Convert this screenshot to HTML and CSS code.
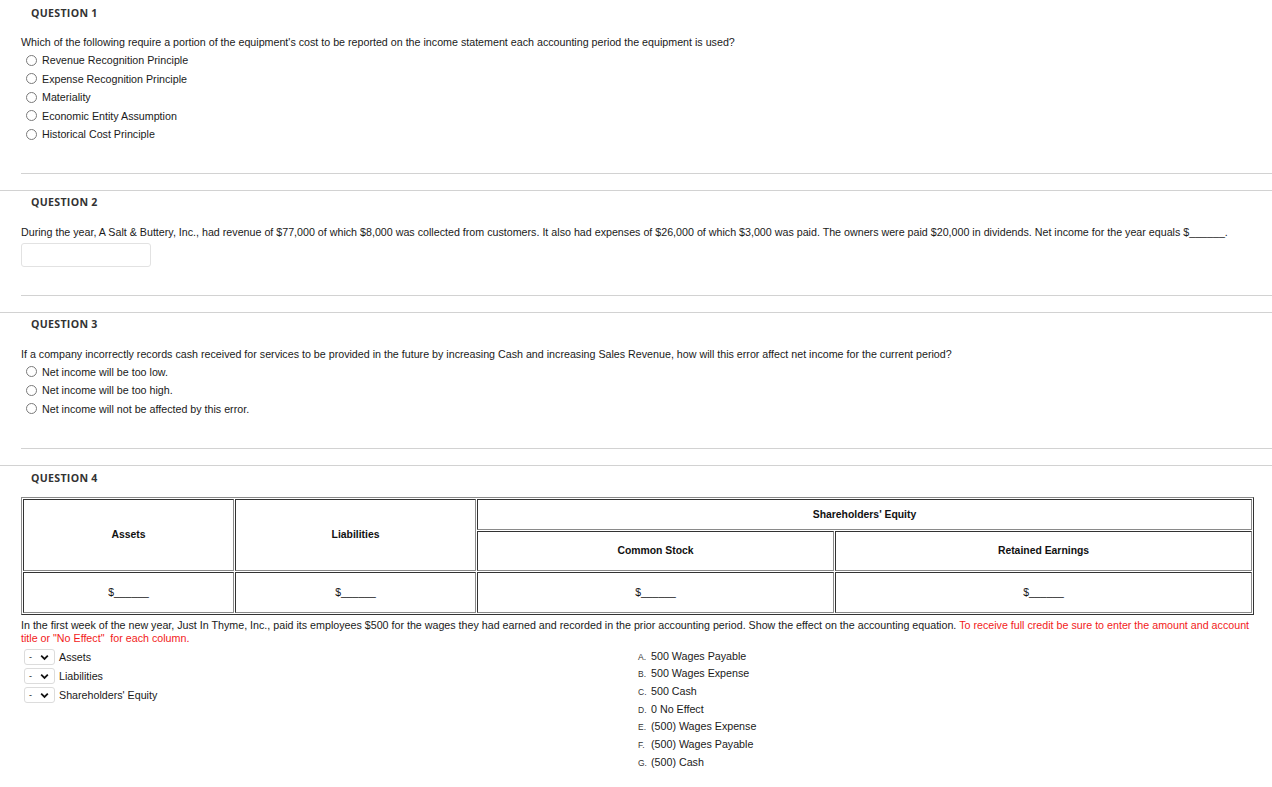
FILE: index.html
```html
<!DOCTYPE html>
<html>
<head>
<meta charset="utf-8">
<link rel="stylesheet" href="styles.css">
</head>
<body>
<div class="question first">
  <div class="qhead">QUESTION 1</div>
  <div class="qbody">
    <div class="qtext">Which of the following require a portion of the equipment's cost to be reported on the income statement each accounting period the equipment is used?</div>
    <ul class="opts">
      <li><span class="radio"></span>Revenue Recognition Principle</li>
      <li><span class="radio"></span>Expense Recognition Principle</li>
      <li><span class="radio"></span>Materiality</li>
      <li><span class="radio"></span>Economic Entity Assumption</li>
      <li><span class="radio"></span>Historical Cost Principle</li>
    </ul>
  </div>
  <div class="inner-rule q1rule"></div>
</div>

<div class="question">
  <div class="qhead">QUESTION 2</div>
  <div class="qbody">
    <div class="qtext">During the year, A Salt &amp; Buttery, Inc., had revenue of $77,000 of which $8,000 was collected from customers. It also had expenses of $26,000 of which $3,000 was paid. The owners were paid $20,000 in dividends. Net income for the year equals $______.</div>
    <div class="answer-box"></div>
  </div>
  <div class="inner-rule q2rule"></div>
</div>

<div class="question">
  <div class="qhead">QUESTION 3</div>
  <div class="qbody">
    <div class="qtext">If a company incorrectly records cash received for services to be provided in the future by increasing Cash and increasing Sales Revenue, how will this error affect net income for the current period?</div>
    <ul class="opts">
      <li><span class="radio"></span>Net income will be too low.</li>
      <li><span class="radio"></span>Net income will be too high.</li>
      <li><span class="radio"></span>Net income will not be affected by this error.</li>
    </ul>
  </div>
  <div class="inner-rule q3rule"></div>
</div>

<div class="question">
  <div class="qhead">QUESTION 4</div>
  <div class="qbody">
    <table class="eq">
      <colgroup>
        <col class="c1"><col class="c2"><col class="c3"><col class="c4">
      </colgroup>
      <tr class="r1">
        <th rowspan="2">Assets</th>
        <th rowspan="2">Liabilities</th>
        <th colspan="2" class="se">Shareholders' Equity</th>
      </tr>
      <tr class="r2">
        <th>Common Stock</th>
        <th>Retained Earnings</th>
      </tr>
      <tr class="r3">
        <td>$______</td>
        <td>$______</td>
        <td>$______</td>
        <td>$______</td>
      </tr>
    </table>
    <div class="q4text">In the first week of the new year, Just In Thyme, Inc., paid its employees $500 for the wages they had earned and recorded in the prior accounting period. Show the effect on the accounting equation. <span class="red">To receive full credit be sure to enter the amount and account title or "No Effect"&nbsp; for each column.</span></div>
    <div class="match">
      <ul class="selects">
        <li><span class="sel"><span class="dash">-</span><svg viewBox="0 0 10 8" width="9" height="7"><path d="M1.2 1.8 L5 5.6 L8.8 1.8" fill="none" stroke="#111" stroke-width="2"/></svg></span>Assets</li>
        <li><span class="sel"><span class="dash">-</span><svg viewBox="0 0 10 8" width="9" height="7"><path d="M1.2 1.8 L5 5.6 L8.8 1.8" fill="none" stroke="#111" stroke-width="2"/></svg></span>Liabilities</li>
        <li><span class="sel"><span class="dash">-</span><svg viewBox="0 0 10 8" width="9" height="7"><path d="M1.2 1.8 L5 5.6 L8.8 1.8" fill="none" stroke="#111" stroke-width="2"/></svg></span>Shareholders' Equity</li>
      </ul>
      <ol class="choices">
        <li><span class="ltr">A.</span>500 Wages Payable</li>
        <li><span class="ltr">B.</span>500 Wages Expense</li>
        <li><span class="ltr">C.</span>500 Cash</li>
        <li><span class="ltr">D.</span>0 No Effect</li>
        <li><span class="ltr">E.</span>(500) Wages Expense</li>
        <li><span class="ltr">F.</span>(500) Wages Payable</li>
        <li><span class="ltr">G.</span>(500) Cash</li>
      </ol>
    </div>
  </div>
</div>
</body>
</html>
```

FILE: styles.css
```css
html, body {
  margin: 0;
  padding: 0;
  background: #fff;
}
body {
  font-family: "Liberation Sans", Arial, sans-serif;
  font-size: 10.7px;
  color: #1a1a1a;
  width: 1272px;
}
.question {
  border-top: 1px solid #d2d2d2;
}
.question.first {
  border-top: none;
}
.question.first .qhead {
  padding-top: 4.5px;
}
.qhead {
  font-family: "Open Sans", sans-serif;
  font-weight: 700;
  font-size: 10.6px;
  letter-spacing: 0.3px;
  color: #333;
  line-height: 16px;
  padding-left: 31px;
  padding-top: 3.5px;
}
.qbody {
  padding-left: 21px;
}
.qtext {
  line-height: 18px;
  margin-top: 12.5px;
}
.opts {
  list-style: none;
  margin: 0;
  padding: 0;
}
.opts li {
  height: 18.5px;
  line-height: 18.5px;
  display: flex;
  align-items: center;
}
.radio {
  width: 9px;
  height: 9px;
  border: 1px solid #7a7a7a;
  border-radius: 50%;
  margin-left: 5px;
  margin-right: 5px;
  box-sizing: content-box;
}
.inner-rule {
  border-top: 1px solid #d2d2d2;
  margin-left: 21px;
  margin-bottom: 16px;
}
.q1rule {
  margin-top: 29px;
}
.q2rule {
  margin-top: 28px;
}
.q3rule {
  margin-top: 30px;
}
.answer-box {
  width: 128px;
  height: 22px;
  border: 1px solid #e2e2e2;
  border-radius: 3px;
  margin-top: 2px;
}
.eq {
  margin-top: 11px;
  width: 1233px;
  table-layout: fixed;
  border-collapse: separate;
  border-spacing: 1px;
  border: 1px solid;
  border-color: #8a8a8a #333 #333 #8a8a8a;
}
.c1 { width: 211px; }
.c2 { width: 241px; }
.c3 { width: 357px; }
.eq th, .eq td {
  border: 1px solid;
  border-color: #333 #8a8a8a #8a8a8a #333;
  text-align: center;
  padding: 0;
  font-size: 10.4px;
  font-weight: 700;
  color: #111;
}
.eq td {
  font-weight: 400;
}
.r1 { height: 31px; }
.r2 { height: 40px; }
.r3 { height: 41px; }
.q4text {
  line-height: 13px;
  margin-top: 4px;
  padding-right: 10px;
}
.red {
  color: #f21a1a;
}
.match {
  display: grid;
  grid-template-columns: 617px auto;
  margin-top: 3px;
}
.selects {
  list-style: none;
  margin: 0;
  padding: 0 0 0 3px;
}
.selects li {
  height: 19px;
  display: flex;
  align-items: center;
}
.sel {
  border: 1px solid #dcdcdc;
  border-radius: 3px;
  display: flex;
  align-items: center;
  justify-content: space-between;
  padding: 0 5px 0 4px;
  margin-right: 4px;
  box-sizing: border-box;
  width: 31px;
  height: 16px;
}
.dash {
  font-size: 9px;
}
.choices {
  list-style: none;
  margin: 0;
  padding: 0;
}
.choices li {
  height: 17.7px;
  line-height: 17.7px;
  white-space: nowrap;
}
.ltr {
  display: inline-block;
  width: 13px;
  font-size: 8.5px;
  color: #333;
}
```
